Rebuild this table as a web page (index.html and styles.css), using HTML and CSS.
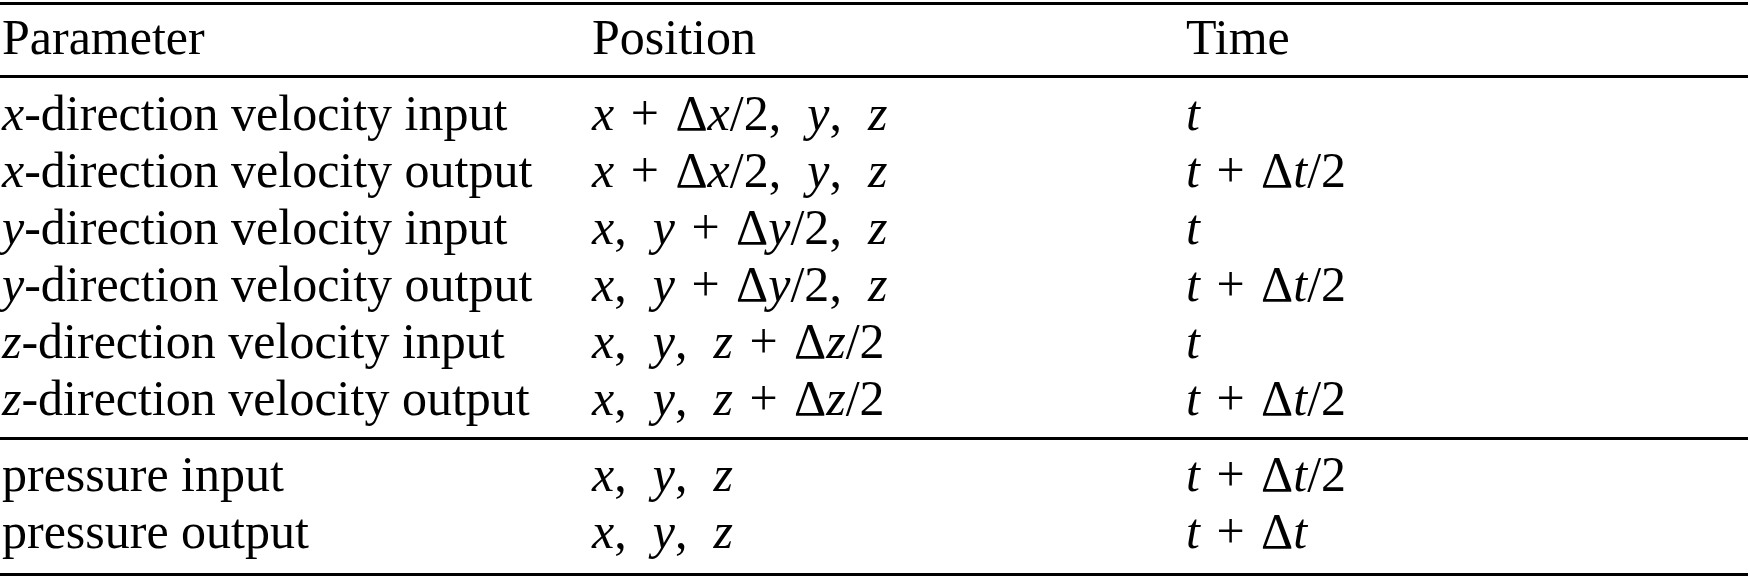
FILE: index.html
```html
<!DOCTYPE html>
<html lang="en">
<head>
<meta charset="utf-8">
<title>Parameter table</title>
<link rel="stylesheet" href="styles.css">
</head>
<body>
<div class="table">
  <div class="group head">
    <div class="row">
      <div class="cell">Parameter</div>
      <div class="cell">Position</div>
      <div class="cell">Time</div>
    </div>
  </div>
  <div class="group body">
    <div class="row">
      <div class="cell"><i>x</i>-direction velocity input</div>
      <div class="cell"><i>x</i><span class="op">+</span>Δ<i>x</i>/2<span class="sep">,</span><i>y</i><span class="sep">,</span><i>z</i></div>
      <div class="cell"><i>t</i></div>
    </div>
    <div class="row">
      <div class="cell"><i>x</i>-direction velocity output</div>
      <div class="cell"><i>x</i><span class="op">+</span>Δ<i>x</i>/2<span class="sep">,</span><i>y</i><span class="sep">,</span><i>z</i></div>
      <div class="cell"><i>t</i><span class="op">+</span>Δ<i>t</i>/2</div>
    </div>
    <div class="row">
      <div class="cell"><i>y</i>-direction velocity input</div>
      <div class="cell"><i>x</i><span class="sep">,</span><i>y</i><span class="op">+</span>Δ<i>y</i>/2<span class="sep">,</span><i>z</i></div>
      <div class="cell"><i>t</i></div>
    </div>
    <div class="row">
      <div class="cell"><i>y</i>-direction velocity output</div>
      <div class="cell"><i>x</i><span class="sep">,</span><i>y</i><span class="op">+</span>Δ<i>y</i>/2<span class="sep">,</span><i>z</i></div>
      <div class="cell"><i>t</i><span class="op">+</span>Δ<i>t</i>/2</div>
    </div>
    <div class="row">
      <div class="cell"><i>z</i>-direction velocity input</div>
      <div class="cell"><i>x</i><span class="sep">,</span><i>y</i><span class="sep">,</span><i>z</i><span class="op">+</span>Δ<i>z</i>/2</div>
      <div class="cell"><i>t</i></div>
    </div>
    <div class="row">
      <div class="cell"><i>z</i>-direction velocity output</div>
      <div class="cell"><i>x</i><span class="sep">,</span><i>y</i><span class="sep">,</span><i>z</i><span class="op">+</span>Δ<i>z</i>/2</div>
      <div class="cell"><i>t</i><span class="op">+</span>Δ<i>t</i>/2</div>
    </div>
  </div>
  <div class="group foot">
    <div class="row">
      <div class="cell">pressure input</div>
      <div class="cell"><i>x</i><span class="sep">,</span><i>y</i><span class="sep">,</span><i>z</i></div>
      <div class="cell"><i>t</i><span class="op">+</span>Δ<i>t</i>/2</div>
    </div>
    <div class="row">
      <div class="cell">pressure output</div>
      <div class="cell"><i>x</i><span class="sep">,</span><i>y</i><span class="sep">,</span><i>z</i></div>
      <div class="cell"><i>t</i><span class="op">+</span>Δ<i>t</i></div>
    </div>
  </div>
</div>
</body>
</html>
```
FILE: styles.css
```css
html, body {
  margin: 0;
  padding: 0;
  background: #ffffff;
}

body {
  font-family: "Liberation Serif", "Times New Roman", serif;
  font-size: 50px;
  color: #000000;
}

.table {
  width: 1748px;
  margin-top: 2px;
}

.group {
  border-top: 3px solid #000000;
}

.head {
  padding: 4px 0 9px;
}

.body {
  padding: 7px 0 10px;
}

.foot {
  padding: 6px 0 13px;
  border-bottom: 3px solid #000000;
}

.row {
  display: grid;
  grid-template-columns: 590px 594px 1fr;
  line-height: 57px;
  height: 57px;
}

.cell {
  padding-left: 2px;
  white-space: nowrap;
}

.cell i {
  font-style: italic;
}

.op {
  margin: 0 0.33em;
}

.sep {
  margin-right: 0.52em;
}
```
